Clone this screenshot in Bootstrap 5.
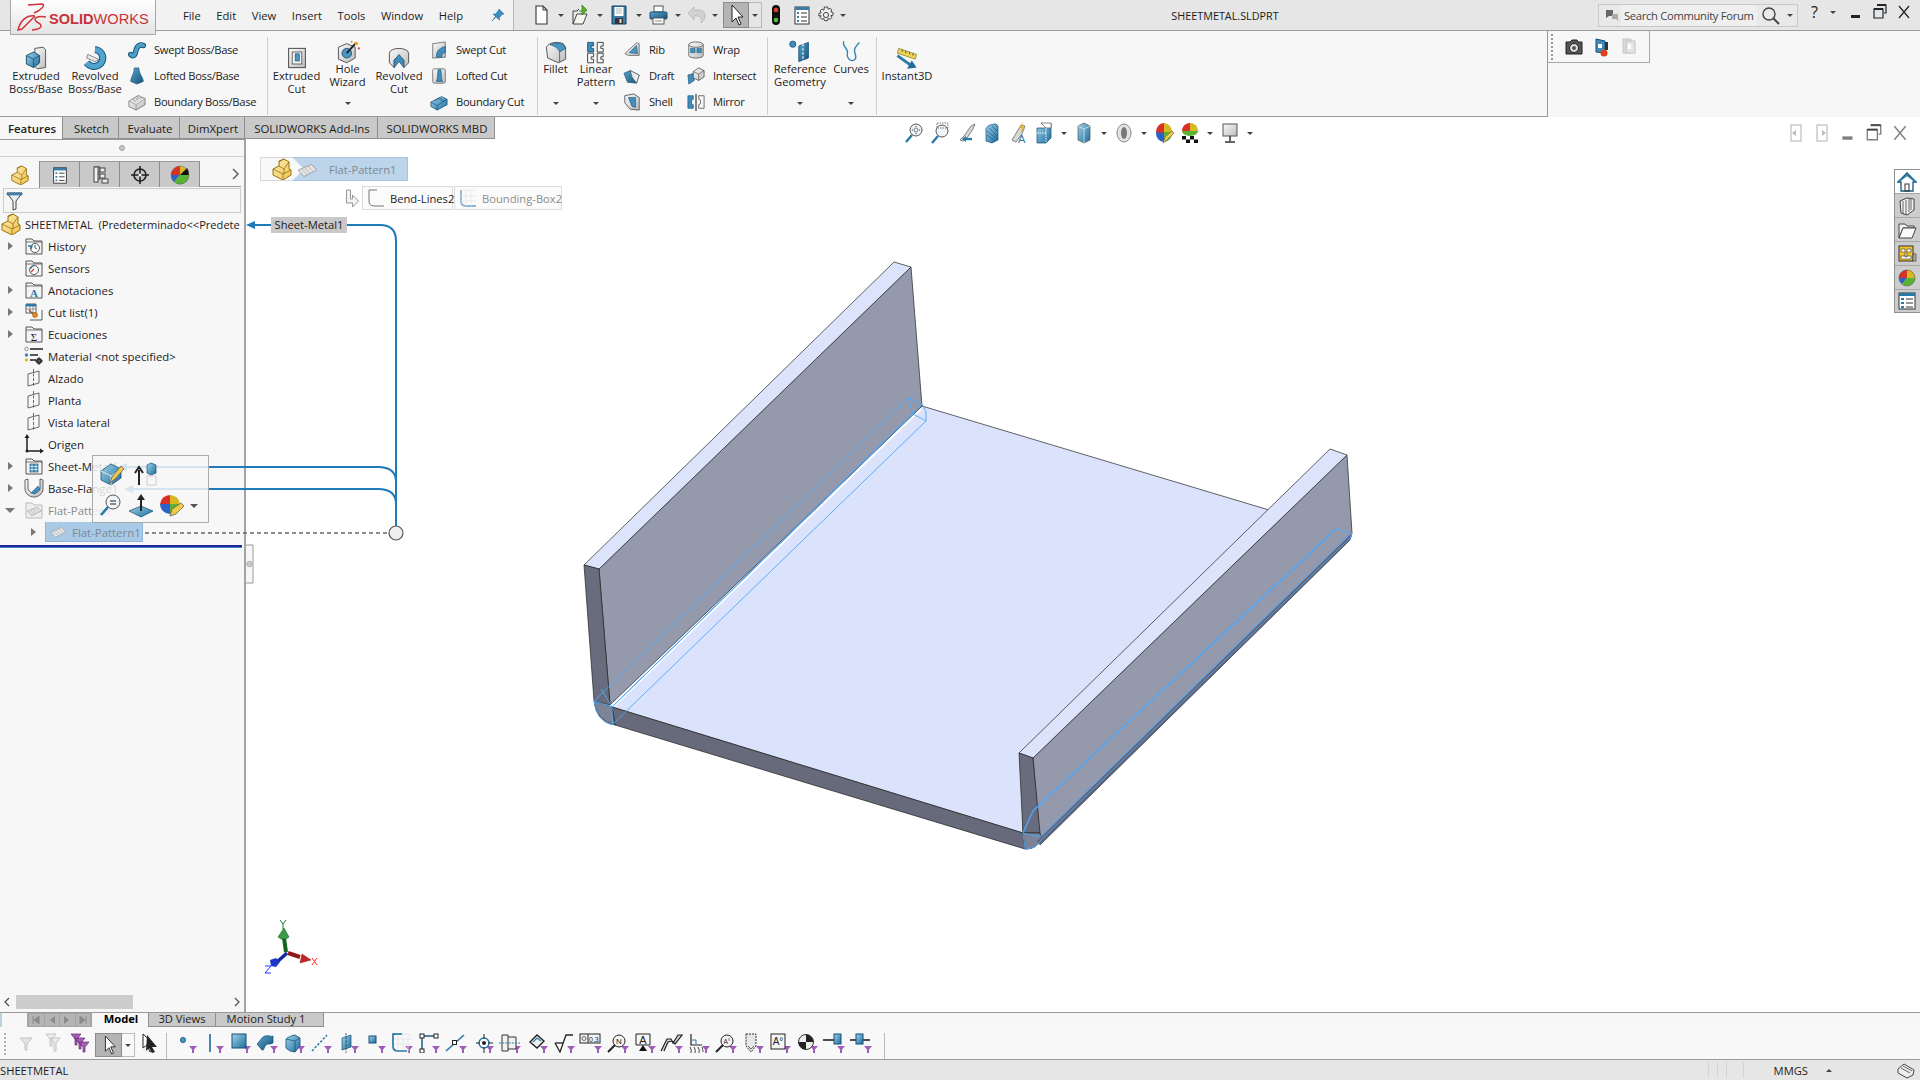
<!DOCTYPE html>
<html lang="en">
<head>
<meta charset="utf-8">
<title>SOLIDWORKS</title>
<link href="https://cdn.jsdelivr.net/npm/bootstrap@5.3.0/dist/css/bootstrap.min.css" rel="stylesheet">
<style>
html,body{height:100%;margin:0}
body{width:1920px;height:1080px;overflow:hidden;background:#fff;font-family:"Open Sans","Noto Sans",sans-serif;font-size:11.2px;line-height:13px;color:#1c1c1c;position:relative}
svg{display:block;flex:none}
.titlebar{height:31px;flex:none;background:#e6e6e6;border-bottom:1px solid #9c9c9c}
.logo{width:146px;height:35px;margin-left:10px;background:linear-gradient(#fff,#e4e4e4);border:1px solid #a8a8a8;border-top:0;position:relative;z-index:8;flex:none;padding-left:6px;gap:3px}
.logo-text{font-family:"Liberation Sans",sans-serif;font-size:14.6px;color:#c8323a;line-height:15px;padding-top:5px}
.logo-text b{font-weight:700}
.logo-text span{font-weight:400}
.menuzone{width:358px;height:30px;background:#f2f2f2;border-right:1px solid #b8b8b8;flex:none;padding-left:27px;gap:15.6px}
.qbar{padding-left:17px}
.qi{width:20px;height:22px}
.car{width:0;height:0;border-left:3px solid transparent;border-right:3px solid transparent;border-top:3px solid #444;flex:none}
.carcell{width:19px}
.cc16{width:16px}
.selbox{width:26px;height:26px;background:#b4b4b4;border:1px solid #8c8c8c}
.selcar{width:13px;height:26px;border:1px solid #b9b9b9;border-left:0}
.ms6{margin-left:6px}
.doctitle{position:absolute;left:1120px;width:210px;top:9px;text-align:center;font-size:10.8px}
.search{width:200px;height:23px;background:#e9e9e9;border:1px solid #c8c8c8;margin-left:1598px;flex:none;position:absolute;left:0;top:4px}
.search-in{background:#efefef;width:136px;height:21px;padding-left:3px;color:#444;white-space:nowrap;letter-spacing:-.3px;overflow:hidden}
.winbtns{position:absolute;top:4px;left:1811px}
.qm{font-size:16px;margin-right:8px}
.wcar{margin-left:4px;margin-right:12px}
.upper{height:86px;flex:none;background:#f7f7f7}
.ribbon{width:1548px;height:86px;flex:none;border-right:1px solid #999;border-bottom:1px solid #999;padding-top:6px;background:#f7f7f7}
.grp{height:78px;border-right:1px solid #cfcfcf;flex:none}
.g1{width:268px;padding-left:6px}.g2{width:270px;padding-left:3px}.g3{width:230px}.g4{width:109px}.g5{width:60px}
.rb{flex:none;text-align:center;align-items:center;height:78px}
.rb .ric{height:24px;width:24px;flex:none}
.va{padding-top:9px}.vb{padding-top:3px}
.va .lab{margin-top:-1px}
.vb .lab{margin-top:-2px}
.rb .car{margin-top:auto;margin-bottom:10px}
.w60{width:60px}.w58{width:58px}.w51{width:51px}.w52{width:52px}.w35{width:35px}.w46{width:46px}.w64{width:64px}.w38{width:38px}
.rl{flex:none;letter-spacing:-.3px;margin-top:-1px}
.rl>div{height:26px;gap:8px;white-space:nowrap}
.rl svg{margin-top:1px}
.ml4{margin-left:4px}.ml5{margin-left:5px}
.wl1{width:64px}
.shots{width:102px;height:32px;border-right:1px solid #a8a8a8;border-bottom:1px solid #a8a8a8;padding-left:3px;gap:7px;flex:none}
.grip{width:0;height:26px;border-left:2px dotted #9a9a9a;margin-right:4px}
.tabsrow{height:22px;flex:none;background:#fff;position:relative;z-index:3}
.cmtab{height:22px;border:1px solid #8f8f8f;border-left:0;border-top:0;background:#c9c9c9;text-align:center;line-height:21px;padding:1px 0 0 2px;flex:none;font-size:11.4px}
.cmtab.on{background:#f7f7f7;font-weight:600;border-bottom:0;border-right:1px solid #8f8f8f}
.t63{width:63px}.t56{width:56px}.t61{width:61px}.t65{width:65px}.t133{width:133px}.t117{width:117px}
.vtb{margin-left:406px;padding-top:5px;height:22px;overflow:visible}
.vi{width:26px;height:22px}
.vc{width:14px;display:flex;justify-content:center;padding-top:10px}
.dctl{margin-left:auto;padding-top:5px;padding-right:7px}
.main{flex:1 1 auto;min-height:0;height:873px}
.panel{width:246px;flex:none;background:#f7f7f7;border-right:2px solid #a4a4a4;border-top:1px solid #999;position:relative}
.pgrip{height:17px;border-bottom:1px solid #d0d0d0;flex:none;justify-content:center}
.dot{width:6px;height:6px;border-radius:50%;background:#c8c8c8;border:1px solid #a0a0a0}
.ptabs{margin-top:4px;height:26px;flex:none;border-bottom:1px solid #9a9a9a;margin-right:3px}
.ptab{width:40px;height:26px;background:#c9c9c9;border-right:1px solid #8c8c8c;border-top:1px solid #9a9a9a;flex:none;justify-content:center}
.ptab.on{background:#f7f7f7;border-top:0;margin-bottom:-1px;position:relative;height:27px}
.chev{margin-left:auto}
.pfilter{margin:1px 3px 0 3px;height:25px;border:1px solid #ccc;background:#f6f6f6;flex:none;padding-left:2px}
.tree{margin-top:0;flex:none}
.tree .list-group-item{background:transparent;border:0;padding:0;height:22px;color:#1c1c1c;white-space:nowrap;overflow:hidden;display:flex;align-items:center;font-size:11.4px;border-radius:0}
.ta{width:20px;flex:none;display:flex;justify-content:center}
.ti{width:20px;height:20px;margin-left:4px;margin-right:4px}
.tree .list-group-item.root{font-size:11.1px}
.tree .root .ti{width:22px;height:22px;margin-left:0;margin-right:3px}
.tree .list-group-item.pm{color:#8a8a8a}
.ta10{width:10px;margin-left:28px}
.tree .list-group-item .flatsel{margin-left:7px;width:98px;height:20px;background:#a9cae6;color:#7c8894;padding-left:2px;gap:4px;border:1px solid #8fb6d8;border-top-color:#a9cae6}
.arr-r{width:0;height:0;border-top:4px solid transparent;border-bottom:4px solid transparent;border-left:5px solid #777}
.arr-d{width:0;height:0;border-left:5px solid transparent;border-right:5px solid transparent;border-top:5px solid #777}
.bluebar{height:3px;background:#2323a0;margin-right:2px;flex:none;margin-top:2px;border-bottom:1px solid #3a86c0}
.hsb{height:14px;margin-top:auto;margin-bottom:3px;flex:none}
.thumb{width:117px;height:14px;background:#cdcdcd;margin-left:4px}
.sa{width:9px;justify-content:center;display:flex;margin-left:3px}
.viewport{position:relative;flex:1 1 auto;background:#fff;min-width:0}
.model{position:absolute;left:0;top:0}
.crumb{left:14px;top:18px}
.cr1{width:147px;height:24px;border:1px solid #d8d8d8;background:#f8f8f8;color:#7c8894}
.cr1 .blue{position:absolute;left:31px;top:-1px;bottom:-1px;width:116px;background:#bcd5ea;border:1px solid #a6c4dd;border-left:0;clip-path:polygon(0 0,100% 0,100% 100%,0 100%,12px 50%)}
.cr1 .tx{position:absolute;left:68px;top:5px}
.cpart{left:10px;top:0}
.cflat{left:35px;top:1px}
.cr2{position:absolute;left:97px;top:47px;gap:1px}
.cbox{height:24px;border:1px solid #dcdcdc;background:#fbfbfb;gap:4px;padding-left:3px;white-space:nowrap}
.b1{width:91px}.b2{width:108px;color:#8b8b8b}
.bentry{width:17px;margin-right:1px}
.task{position:absolute;right:0;top:30px;width:26px;border:1px solid #8f8f8f;border-right:0;background:#cdcdcd}
.task>div{height:24px;width:25px;border-bottom:1px solid #a8a8a8;padding-left:2px}
.task>div:last-child{border-bottom:0;height:22px}
.task>.on{background:#fff}
.overlay{position:absolute;left:0;top:0;z-index:5;pointer-events:none}
.smlabel{position:absolute;left:271px;top:217px;width:76px;height:16px;background:#c9c9c9;z-index:6;text-align:center;line-height:15px}
.ctx{position:absolute;left:92px;top:455px;width:117px;height:68px;background:rgba(247,247,247,.84);border:1px solid #ababab;z-index:7;padding:5px 0 0 5px;row-gap:3px}
.ctx .c{width:30px;height:28px}
.ctx .car{margin-left:2px;margin-top:12px;border-top-color:#555;border-left-width:4px;border-right-width:4px;border-top-width:4px}
.btabs{height:15px;flex:none;background:#f7f7f7;border-top:1px solid #999;font-size:11.2px}
.bmark{width:2px;height:14px;background:#b6d4e4;margin-right:25px}
.nav4{width:65px;height:14px;background:#a4a4a4;gap:1px;padding:1px 2px}
.nav4 span{flex:1;height:12px;background:#b4b4b4;display:flex;align-items:center;justify-content:center}
.btab{height:14px;line-height:11px;border-right:1px solid #8f8f8f;border-bottom:1px solid #8f8f8f;background:#c9c9c9;text-align:center;flex:none}
.btab.on{background:#f7f7f7;border-bottom:0;font-weight:700;color:#000;padding-left:2px}
.t57{width:57px}.t67{width:67px}.t108{width:108px;padding-right:7px}
.btools{height:33px;flex:none;background:#f8f8f8;border-bottom:1px solid #9c9c9c;padding-top:6px}
.bgrip{margin-left:4px;width:0;height:22px;border-left:2px dotted #b0b0b0;margin-right:10px}
.bf{width:27px;height:20px;flex:none}
.fg2{margin-left:6px}
.fg3{margin-left:4px;margin-right:4px}
.blk{margin-left:4px;margin-right:7px}
.sep{width:1px;height:26px;background:#bcbcbc;flex:none}
.sep1{margin-right:7px}
.sep2{margin-left:8px}
.sel{width:27px;height:24px;background:#b4b4b4;border:1px solid #8c8c8c;margin-left:1px}
.selc{width:13px;height:24px;border:1px solid #bdbdbd;border-left:0}
.status{height:20px;flex:none;background:#e6e6e6;font-size:11.2px}
.status .vdiv{width:1px;height:16px;background:#d4d4d4}
.mmgs{margin:0 18px 0 30px}
.caru{width:0;height:0;border-left:3px solid transparent;border-right:3px solid transparent;border-bottom:3px solid #444;margin-right:64px}
</style>
</head>
<body class="d-flex flex-column">

<svg width="0" height="0" class="position-absolute">
<defs>
<linearGradient id="gb" x1="0" y1="0" x2="1" y2="1"><stop offset="0" stop-color="#9fd3ea"/><stop offset="1" stop-color="#1d6c9c"/></linearGradient>
<linearGradient id="gd" x1="0" y1="0" x2="1" y2="1"><stop offset="0" stop-color="#5aa6cc"/><stop offset="1" stop-color="#134f78"/></linearGradient>
<linearGradient id="gg" x1="0" y1="0" x2="1" y2="1"><stop offset="0" stop-color="#fafafa"/><stop offset="1" stop-color="#bdbdbd"/></linearGradient>
<linearGradient id="gy" x1="0" y1="0" x2="1" y2="1"><stop offset="0" stop-color="#fdeeb4"/><stop offset="1" stop-color="#efc250"/></linearGradient>

<symbol id="ext" viewBox="0 0 20 20"><path d="M9 2l7-1 2 2v15l-7 1-2-2z" fill="url(#gg)" stroke="#555" stroke-width=".8"/><path d="M2 8l6-3 5 3v6l-5 4-6-3z" fill="url(#gb)" stroke="#1d4f70" stroke-width=".8"/><path d="M2 8l6 3 5-3M8 11v7" fill="none" stroke="#1d4f70" stroke-width=".7"/></symbol>
<symbol id="rev" viewBox="0 0 20 20"><path d="M10 3a7 7 0 0 1 3 13 A8 8 0 0 1 3 14" fill="none" stroke="#13547e" stroke-width="6"/><path d="M10 3a7 7 0 0 1 3 13 A8 8 0 0 1 3 14" fill="none" stroke="#52a4cc" stroke-width="4.4"/><path d="M4 7l9 4-3 2-7-3z" fill="#e8e8e8" stroke="#666" stroke-width=".6"/></symbol>
<symbol id="swp" viewBox="0 0 20 20"><path d="M3 15c4 4 5-1 6-5s4-7 8-5" fill="none" stroke="#134f78" stroke-width="6" stroke-linecap="round"/><path d="M3 15c4 4 5-1 6-5s4-7 8-5" fill="none" stroke="#4f9ec6" stroke-width="4" stroke-linecap="round"/></symbol>
<symbol id="lof" viewBox="0 0 20 20"><path d="M7 1h5c0 7 5 10 5 15l-7 3-7-3c0-5 4-8 4-15z" fill="url(#gd)" stroke="#134f78" stroke-width=".7"/></symbol>
<symbol id="bnd" viewBox="0 0 20 20"><path d="M1 9l10-6 8 3v7l-10 6-8-4z" fill="url(#gg)" stroke="#666" stroke-width=".8"/><path d="M1 9l8 4 10-7M9 13v6M5 7l3-2 3 2-3 2zM10 4l3-1 2 2-3 1z" fill="#e2e2e2" stroke="#777" stroke-width=".6"/></symbol>
<symbol id="xcut" viewBox="0 0 20 20"><rect x="3" y="2" width="14" height="16" fill="url(#gg)" stroke="#555" stroke-width=".9"/><rect x="6" y="5" width="8" height="10" fill="#f3f3f3" stroke="#555" stroke-width=".7"/><rect x="8.5" y="6.5" width="3.5" height="6" fill="#4a96c0" stroke="#134f78" stroke-width=".5"/></symbol>
<symbol id="hole" viewBox="0 0 20 20"><path d="M2 6l7-3 7 3v9l-7 4-7-3z" fill="url(#gg)" stroke="#555" stroke-width=".8"/><circle cx="9" cy="11" r="4" fill="#4a96c0" stroke="#134f78" stroke-width=".7"/><path d="M9 11l8-9" stroke="#222" stroke-width="1.6"/><circle cx="17" cy="3" r="1.5" fill="#f5a623"/><circle cx="13" cy="1.5" r=".9" fill="#e0a020"/><circle cx="19" cy="7" r=".9" fill="#d33"/></symbol>
<symbol id="rvc" viewBox="0 0 20 20"><path d="M2 6a8 4 0 0 1 16 0v8l-4 4v-6a4 2 0 0 0-8 0v6l-4-4z" fill="url(#gg)" stroke="#555" stroke-width=".8"/><path d="M6 12v6l4-5 4 5v-6l-4-5z" fill="#3f8db8" stroke="#134f78" stroke-width=".6"/></symbol>
<symbol id="swc" viewBox="0 0 20 20"><path d="M3 3l14-2v17l-14 1z" fill="url(#gg)" stroke="#555" stroke-width=".8"/><path d="M7 18c0-6 2-10 10-12v7c-3 0-4 2-4 5z" fill="#3f8db8" stroke="#134f78" stroke-width=".6"/></symbol>
<symbol id="lfc" viewBox="0 0 20 20"><rect x="3" y="2" width="14" height="16" rx="2" fill="url(#gg)" stroke="#555" stroke-width=".8"/><path d="M7 16c2-4 1-8 2-13h3c1 5 0 9 2 13z" fill="#3f8db8" stroke="#134f78" stroke-width=".6"/></symbol>
<symbol id="bdc" viewBox="0 0 20 20"><path d="M1 10l12-6 6 3v6l-11 6-7-4z" fill="url(#gb)" stroke="#134f78" stroke-width=".8"/><path d="M5 9l4-3 4 1c-1 3 2 3 4 1" fill="none" stroke="#134f78" stroke-width=".8"/><path d="M1 10l7 4 11-7M8 14v5" fill="none" stroke="#134f78" stroke-width=".7"/></symbol>
<symbol id="fil" viewBox="0 0 20 20"><path d="M2 6c2-4 9-5 14-3l2 3v10l-6 3-9-4z" fill="url(#gg)" stroke="#555" stroke-width=".8"/><path d="M5 4c3-2 8-2 11 0l2 3-5 3c-1-3-4-5-8-6z" fill="#4a96c0" stroke="#134f78" stroke-width=".5"/><path d="M13 10v9" stroke="#666" stroke-width=".8"/></symbol>
<symbol id="lin" viewBox="0 0 20 20"><path d="M3 2h5v3H6v2h2v3H3z" fill="#3f8db8" stroke="#134f78" stroke-width=".7"/><path d="M11 2h5v3h-2v2h2v3h-5z M11 11h5v3h-2v2h2v3h-5z" fill="#f5f5f5" stroke="#444" stroke-width=".8"/><path d="M3 11h5v3H6v2h2v3H3z" fill="#f5f5f5" stroke="#444" stroke-width=".8"/></symbol>
<symbol id="rib" viewBox="0 0 20 20"><path d="M2 14L15 2l3 1v13H6z" fill="url(#gg)" stroke="#555" stroke-width=".8"/><path d="M7 13L15 5l1 9z" fill="#4a96c0" stroke="#134f78" stroke-width=".6"/></symbol>
<symbol id="drf" viewBox="0 0 20 20"><path d="M1 7l7-3 10 5-3 9-10-1z" fill="url(#gd)" stroke="#134f78" stroke-width=".7"/><path d="M8 4l10 5-3 9-5-7z" fill="#eee" stroke="#444" stroke-width=".7"/></symbol>
<symbol id="shl" viewBox="0 0 20 20"><path d="M2 3l10-2 6 4v14l-10-1-6-7z" fill="url(#gg)" stroke="#444" stroke-width=".9"/><path d="M6 5l8 0v11l-4-1z" fill="#3f8db8" stroke="#134f78" stroke-width=".6"/></symbol>
<symbol id="wrp" viewBox="0 0 20 20"><path d="M2 4a8 3 0 0 1 16 0v12a8 3 0 0 1-16 0z" fill="url(#gg)" stroke="#555" stroke-width=".9"/><path d="M2 4a8 3 0 0 0 16 0" fill="none" stroke="#555" stroke-width=".8"/><path d="M4 8h5v5H4zM11 8h5v5h-5z" fill="#3f8db8" stroke="#134f78" stroke-width=".5"/></symbol>
<symbol id="int" viewBox="0 0 20 20"><path d="M1 9l7-2v8l-6 4z" fill="#3f8db8" stroke="#134f78" stroke-width=".7"/><path d="M7 5l6-4 6 3v7l-6 4-6-3z" fill="url(#gg)" stroke="#444" stroke-width=".8"/><path d="M7 5l6 3 6-4M13 8v7" fill="none" stroke="#444" stroke-width=".7"/></symbol>
<symbol id="mir" viewBox="0 0 20 20"><path d="M1 3h6v4l-2 1v4l2 1v4H1z" fill="#3f8db8" stroke="#134f78" stroke-width=".7"/><path d="M19 3h-6v4l2 1v4l-2 1v4h6z" fill="#f5f5f5" stroke="#444" stroke-width=".8"/><path d="M10 1v19" stroke="#111" stroke-width="1.1"/></symbol>
<symbol id="ref" viewBox="0 0 20 20"><circle cx="4" cy="3.5" r="2.6" fill="#3f8db8" stroke="#134f78" stroke-width=".6"/><path d="M9 5l8-3v13l-8 3z" fill="url(#gd)" stroke="#134f78" stroke-width=".7"/><path d="M12.5 0v20" stroke="#fff" stroke-width="1" stroke-dasharray="2 1.4"/></symbol>
<symbol id="crv" viewBox="0 0 20 20"><path d="M4 1c-2 4 4 6 3 10-1 3 2 7 5 6s2-4 1-7 2-6 4-8" fill="none" stroke="#3a86b0" stroke-width="1.2"/></symbol>
<symbol id="i3d" viewBox="0 0 20 20"><path d="M3 2l15 5-1 4L2 6z" fill="#f1d35a" stroke="#8a7a20" stroke-width=".6"/><path d="M6 3v2M9 4v2M12 5v2M15 6v2" stroke="#444" stroke-width=".7"/><path d="M2 8l11 8" stroke="#2a7aa8" stroke-width="2.4"/><path d="M10 19l8-1-4-6z" fill="#1d6c9c"/></symbol>

<symbol id="new" viewBox="0 0 20 22"><path d="M5 2h7l4 4v14H5z" fill="#fff" stroke="#333" stroke-width="1.1"/><path d="M12 2v4h4" fill="none" stroke="#333"/></symbol>
<symbol id="opn" viewBox="0 0 20 22"><path d="M3 7v13l10 0 4-10H7L3 20" fill="#f6f6f0" stroke="#444" stroke-width="1"/><path d="M3 7h4l2-2" fill="none" stroke="#444"/><path d="M10 7h3V1l5 5-5 5V8" fill="#5cb030" stroke="#2d7d12" stroke-width=".7" transform="translate(-1 0)"/></symbol>
<symbol id="sav" viewBox="0 0 20 22"><path d="M3 2h14v18H3z" fill="#3a7ea8" stroke="#123e5e" stroke-width="1"/><rect x="5.5" y="3" width="9" height="9" fill="#fff"/><path d="M7 5h6M7 7h6M7 9h6" stroke="#999" stroke-width=".7"/><rect x="6" y="14" width="8" height="6" fill="#333"/><rect x="10.5" y="15" width="2" height="4" fill="#ddd"/></symbol>
<symbol id="prt" viewBox="0 0 20 22"><rect x="6" y="2" width="9" height="6" fill="#fff" stroke="#555"/><rect x="2" y="8" width="17" height="7" rx="1" fill="url(#gd)" stroke="#134f78"/><rect x="5" y="14" width="11" height="6" fill="#fff" stroke="#555"/><path d="M7 17h7" stroke="#888"/></symbol>
<symbol id="und" viewBox="0 0 20 22"><path d="M7 6h6c3 0 5 3 5 6s-2 5-4 7c1-3 0-7-3-7H7v4L1 9l6-6z" fill="#d2d2d2" stroke="#b0b0b0" stroke-width=".7"/></symbol>
<symbol id="cur" viewBox="0 0 20 22"><path d="M6 1v17l4-4 3 7 2-1-3-7h5z" fill="#fff" stroke="#222" stroke-width="1"/></symbol>
<symbol id="trf" viewBox="0 0 20 22"><rect x="6" y="1" width="8" height="20" rx="4" fill="#111"/><circle cx="10" cy="6" r="2.3" fill="#e23b2a"/><circle cx="10" cy="16" r="2.3" fill="#4cc23a"/></symbol>
<symbol id="pro" viewBox="0 0 20 22"><rect x="3" y="3" width="14" height="17" fill="#fff" stroke="#333"/><rect x="3" y="3" width="14" height="3" fill="#3a7ea8"/><path d="M5 8h2v2H5zM5 12h2v2H5zM5 16h2v2H5z" fill="#3a7ea8"/><path d="M9 9h6M9 13h6M9 17h6" stroke="#333"/></symbol>
<symbol id="gea" viewBox="0 0 20 22"><path d="M10 3l1.600 0 .6 2.300 2-1 1.600 1.600-1 2 2.300.6v2.600l-2.300.6 1 2-1.600 1.600-2-1-.6 2.300H8.400l-.6-2.300-2 1-1.600-1.600 1-2L2.900 12V9.400L5.200 8.800l-1-2L5.800 5.200l2 1L8.400 3z" fill="#f0f0f0" stroke="#444"/><circle cx="10" cy="11" r="2.600" fill="none" stroke="#444"/></symbol>

<symbol id="part" viewBox="0 0 22 22"><path d="M2 11l6-3V3l5-2 5 3v7l2 1v5l-8 5-10-5z" fill="url(#gy)" stroke="#96700e" stroke-width="1"/><path d="M2 11l10 5v5M12 16l8-4M8 8l5 3v5M13 11l5-7M13 1l-5 3" fill="none" stroke="#96700e" stroke-width=".8"/></symbol>
<symbol id="ptree" viewBox="0 0 20 20"><path d="M4 2h6v5H7v2h3v5H7v3" fill="none" stroke="#444"/><rect x="4" y="2" width="4" height="15" fill="#f2f2f2" stroke="#444"/><rect x="10" y="3" width="5" height="4" fill="#eee" stroke="#444"/><rect x="10" y="9" width="5" height="4" fill="#eee" stroke="#444"/><rect x="12" y="14" width="6" height="4" fill="#eee" stroke="#444"/></symbol>
<symbol id="tgt" viewBox="0 0 20 20"><circle cx="10" cy="10" r="6" fill="none" stroke="#222" stroke-width="1.600"/><path d="M10 1v18M1 10h18" stroke="#222" stroke-width="1.600"/><circle cx="10" cy="10" r="1.500" fill="#fff"/></symbol>
<symbol id="ball" viewBox="0 0 20 20"><path d="M10 10V1a9 9 0 0 1 9 9z" fill="#d9b820"/><path d="M10 10H1a9 9 0 0 1 9-9z" fill="#d83226"/><path d="M10 10H1a9 9 0 0 0 3 7z" fill="#2c62c8"/><path d="M10 10l-6 7a9 9 0 0 0 15-7z" fill="#58b334"/><path d="M10 10l7-7a9 9 0 0 1 2 7z" fill="#111"/><circle cx="10" cy="10" r="9" fill="none" stroke="#666" stroke-width=".5"/></symbol>
<symbol id="flt" viewBox="0 0 18 20"><path d="M1 2h15L10 10v8l-3 1v-9z" fill="#e8f0f5" stroke="#333" stroke-width=".9"/><path d="M1 2h15v2H1z" fill="#4a96c0" stroke="#134f78" stroke-width=".5"/></symbol>
<symbol id="fold" viewBox="0 0 20 20"><path d="M2 3h6l2 2h8v13H2z" fill="#f4f4f4" stroke="#444" stroke-width=".9"/><path d="M2 6h16" stroke="#444" stroke-width=".7"/></symbol>
<symbol id="hist" viewBox="0 0 20 20"><use href="#fold"/><circle cx="11" cy="12" r="4.500" fill="#fff" stroke="#333" stroke-width=".8"/><path d="M4 10h4l-1 3" fill="none" stroke="#2a7aa8" stroke-width="1.400"/><path d="M11 9v3l2 1" fill="none" stroke="#333" stroke-width=".8"/></symbol>
<symbol id="sens" viewBox="0 0 20 20"><use href="#fold"/><circle cx="10" cy="12" r="4.500" fill="#fff" stroke="#333" stroke-width=".8"/><path d="M7 14l3-3" stroke="#d33" stroke-width="1.200"/><path d="M6.500 11a4 4 0 0 1 3-3" stroke="#2a7aa8" stroke-width="1.200" fill="none"/></symbol>
<symbol id="anno" viewBox="0 0 20 20"><use href="#fold"/><text x="10" y="17" text-anchor="middle" font-family="Liberation Serif,serif" font-weight="700" font-size="11" fill="#2a7aa8">A</text></symbol>
<symbol id="cutl" viewBox="0 0 20 20"><path d="M2 2h10v9H2z" fill="#fff" stroke="#333" stroke-width=".8"/><path d="M2 2h10v2.500H2z" fill="#2a7aa8"/><path d="M2 7h10M6 4v7M9 4v7" stroke="#555" stroke-width=".6"/><path d="M18 8v10H6" fill="none" stroke="#333" stroke-width=".8"/><path d="M5 8l4 4" stroke="#8a5a20" stroke-width="1.400"/><circle cx="11" cy="13" r="2.500" fill="#e58a1f" stroke="#925208" stroke-width=".5"/></symbol>
<symbol id="eqn" viewBox="0 0 20 20"><use href="#fold"/><text x="10" y="17" text-anchor="middle" font-family="Liberation Serif,serif" font-size="11" fill="#222">&#931;</text></symbol>
<symbol id="mat" viewBox="0 0 20 20"><circle cx="2.500" cy="3" r="1.800" fill="#eee" stroke="#666" stroke-width=".6"/><circle cx="2.500" cy="9" r="1.800" fill="#3f8db8"/><circle cx="2.500" cy="14" r="1.800" fill="#e6c12c"/><path d="M6 3h13M6 9h8M6 14h6" stroke="#222" stroke-width="1.500"/><circle cx="15" cy="15" r="3" fill="#333"/><circle cx="15" cy="15" r="1" fill="#fff"/><path d="M15 11v8M11 15h8" stroke="#333"/></symbol>
<symbol id="pln" viewBox="0 0 20 20"><path d="M4 6l11-3v12L4 18z" fill="none" stroke="#444" stroke-width=".8"/><path d="M9.500 1v18" stroke="#444" stroke-width=".8" stroke-dasharray="3 1.500"/></symbol>
<symbol id="org" viewBox="0 0 20 20"><path d="M3 3v14h14" fill="none" stroke="#222" stroke-width="1.500"/><path d="M3 0l-2.500 4h5zM20 17l-4-2.500v5z" fill="#222"/><circle cx="3" cy="17" r="1.500" fill="#222"/></symbol>
<symbol id="smet" viewBox="0 0 20 20"><use href="#fold"/><rect x="6" y="8" width="8" height="8" fill="#3f8db8" stroke="#134f78" stroke-width=".6"/><path d="M8 8v8M12 8v8M6 10.500h8M6 13.500h8" stroke="#fff" stroke-width=".6"/></symbol>
<symbol id="bfl" viewBox="0 0 20 20"><path d="M1 2l3-1v9c0 3 3 5 6 5s6-2 6-5V1l3 1v9c0 5-5 8-9 8s-9-3-9-8z" fill="url(#gg)" stroke="#444" stroke-width=".8"/><path d="M7 15l7-7 2 3-5 5z" fill="#3f8db8" stroke="#134f78" stroke-width=".5"/></symbol>
<symbol id="fpt" viewBox="0 0 20 20"><path d="M2 10l12-5 5 5-12 6z" fill="#e3e3e3" stroke="#9a9a9a" stroke-width=".8"/><path d="M5 9l5 5M8 8l5 5M11 6.500l5 5" stroke="#b0b0b0" stroke-width=".7"/></symbol>
<symbol id="ffld" viewBox="0 0 20 20"><path d="M2 3h6l2 2h8v13H2z" fill="#efefef" stroke="#b3b3b3" stroke-width=".9"/><use href="#fpt" x="2" y="3" width="16" height="16"/></symbol>

<symbol id="v1" viewBox="0 0 20 22"><circle cx="12" cy="8" r="6" fill="#eef4f8" stroke="#555"/><path d="M8 13l-6 7" stroke="#2a7aa8" stroke-width="2.400"/><circle cx="12" cy="8" r="2" fill="none" stroke="#555" stroke-width=".7"/><path d="M12 4v1M12 11v1M8 8h1M15 8h1" stroke="#444"/></symbol>
<symbol id="v2" viewBox="0 0 20 22"><circle cx="12" cy="9" r="6" fill="#eef4f8" stroke="#555"/><path d="M8 14l-6 7" stroke="#2a7aa8" stroke-width="2.400"/><rect x="7" y="1" width="11" height="5" fill="none" stroke="#777" stroke-dasharray="1.500 1"/></symbol>
<symbol id="v3" viewBox="0 0 20 22"><path d="M4 18l4-4 7-10 4-2-2 5-6 9-4 3z" fill="#d8d8d8" stroke="#666" stroke-width=".8"/><path d="M9 17h7" stroke="#2a7aa8" stroke-width="2.400"/><path d="M10 14l-4 3 4 3z" fill="#2a7aa8"/></symbol>
<symbol id="v4" viewBox="0 0 20 22"><path d="M4 7c0-2 4-5 10-5l2 2v14l-6 3-6-2z" fill="url(#gb)" stroke="#134f78" stroke-width=".7"/><path d="M5 9l10 8M5 13l8 6M7 6l8 8M10 4l5 5" stroke="#134f78" stroke-width=".6"/></symbol>
<symbol id="v5" viewBox="0 0 20 22"><path d="M4 18l9-15 4 1-3 8-6 8z" fill="#d8d8d8" stroke="#666" stroke-width=".8"/><path d="M15 0l-4 6 3 0-2 5 5-6-3 0z" fill="#e8b020"/><text x="10" y="21" font-family="Liberation Sans,sans-serif" font-size="11" fill="#2a7aa8">A</text></symbol>
<symbol id="v6" viewBox="0 0 20 22"><path d="M3 6l9 0 5-5v15l-5 5H3z" fill="url(#gb)" stroke="#134f78" stroke-width=".7"/><path d="M7 1h10v5H12z" fill="#fff" stroke="#555" stroke-width=".7"/><path d="M12 6v15M3 11h9" stroke="#fff" stroke-dasharray="1.500 1"/></symbol>
<symbol id="v7" viewBox="0 0 20 22"><path d="M4 4l6-3 6 3v14l-6 3-6-3z" fill="url(#gb)" stroke="#555" stroke-width=".7"/><path d="M4 4l6 3 6-3M10 7v14" fill="none" stroke="#eee" stroke-width=".7"/></symbol>
<symbol id="v8" viewBox="0 0 20 22"><ellipse cx="10" cy="11" rx="7" ry="9" fill="#e4e4e4" stroke="#888"/><ellipse cx="10" cy="11" rx="3" ry="6" fill="#777"/></symbol>
<symbol id="v9" viewBox="0 0 20 22"><path d="M10 11V1a8 9 0 0 1 8 9z" fill="#d8b820"/><path d="M10 11H2a8 9 0 0 1 8-10z" fill="#d83226"/><path d="M2 10a8 9 0 0 0 8 10v-9z" fill="#2c62c8"/><path d="M10 20a8 9 0 0 0 8-10h-8z" fill="#58b334"/><path d="M9 21l2-6 7-6 2 2-7 7z" fill="#f2c84a" stroke="#555" stroke-width=".6"/></symbol>
<symbol id="v10" viewBox="0 0 20 22"><path d="M10 9V1a8 8 0 0 1 8 8z" fill="#d8b820"/><path d="M10 9H2a8 8 0 0 1 8-8z" fill="#d83226"/><path d="M2 9a8 5 0 0 0 16 0z" fill="#58b334"/><rect x="2" y="14" width="16" height="7" fill="#fff"/><path d="M2 14h4v3.500H2zM10 14h4v3.500h-4zM6 17.500h4V21H6zM14 17.500h4V21h-4z" fill="#111"/></symbol>
<symbol id="v11" viewBox="0 0 20 22"><rect x="3" y="2" width="14" height="12" fill="url(#gg)" stroke="#555"/><path d="M10 14v5M5 20h10" stroke="#333" stroke-width="1.500"/></symbol>
<symbol id="tprev" viewBox="0 0 16 22"><rect x="3" y="3" width="10" height="16" fill="#fff" stroke="#b0b0b0"/><path d="M4 11l4-3v6z" fill="#bbb"/></symbol>
<symbol id="tnext" viewBox="0 0 16 22"><rect x="3" y="3" width="10" height="16" fill="#fff" stroke="#b0b0b0"/><path d="M12 11L8 8v6z" fill="#bbb"/></symbol>
<symbol id="wmin" viewBox="0 0 16 16"><rect x="3" y="11" width="9" height="3" fill="currentColor"/></symbol>
<symbol id="wres" viewBox="0 0 16 16"><path d="M5 1h9v8h-2M2 5h9v9H2z" fill="none" stroke="currentColor" stroke-width="1.200"/><path d="M2 5h9M5 1h9" stroke="currentColor" stroke-width="2"/></symbol>
<symbol id="wx" viewBox="0 0 16 16"><path d="M3 2l10 12M13 2L3 14" stroke="currentColor" stroke-width="1.300"/></symbol>

<symbol id="cam" viewBox="0 0 20 20"><path d="M2 5h4l2-2h5l1 2h4v12H2z" fill="#555" stroke="#222"/><circle cx="10" cy="11" r="4.500" fill="#ddd" stroke="#222"/><circle cx="10" cy="11" r="2" fill="#555"/></symbol>
<symbol id="vid" viewBox="0 0 20 20"><path d="M5 2l9 2v12l-9-1z" fill="#3f8db8" stroke="#134f78"/><rect x="14" y="5" width="3" height="8" fill="#333"/><rect x="7" y="7" width="4" height="4" fill="#fff"/><circle cx="13" cy="16" r="3.500" fill="#e0401a"/></symbol>
<symbol id="vid2" viewBox="0 0 20 20"><path d="M5 2h8v14H5z" fill="#ddd" stroke="#c4c4c4"/><rect x="8" y="4" width="9" height="12" fill="#e4e4e4" stroke="#c4c4c4"/><rect x="10" y="7" width="3" height="5" fill="#fff"/></symbol>

<symbol id="thome" viewBox="0 0 20 20"><path d="M10 1L1 10h3v9h12v-9h3z" fill="#fff" stroke="#13587e" stroke-width="1.300"/><path d="M1 10l9-7 9 7" fill="none" stroke="#2a7aa8" stroke-width="1.600"/><rect x="8" y="12" width="4" height="7" fill="none" stroke="#333"/></symbol>
<symbol id="tbook" viewBox="0 0 20 20"><path d="M3 5l7-3 7 1v11l-7 5-6-2z" fill="#f0f0f0" stroke="#444"/><path d="M6 5v13M9 4v15M12 3v13M14 3v11" stroke="#444" stroke-width=".8"/></symbol>
<symbol id="tfold" viewBox="0 0 20 20"><path d="M2 4h6l2 2h7v2H6L2 18z" fill="#f2f2f2" stroke="#444"/><path d="M6 8h13l-4 10H2z" fill="#fafafa" stroke="#444"/></symbol>
<symbol id="tdsg" viewBox="0 0 20 20"><rect x="2" y="2" width="14" height="15" fill="#f2c52c" stroke="#333"/><path d="M4 5h4v3H4zM10 5h4v3h-4zM4 12h10v3H4zM8 9h2v4H8z" fill="#fff" stroke="#333" stroke-width=".6"/><rect x="16" y="10" width="3" height="7" fill="#aaa" stroke="#333" stroke-width=".6"/></symbol>
<symbol id="tball" viewBox="0 0 20 20"><path d="M10 10V2a8 8 0 0 1 8 8z" fill="#d8b820"/><path d="M10 10H2a8 8 0 0 1 8-8z" fill="#d83226"/><path d="M2 10a8 8 0 0 0 3 6l5-6z" fill="#2c62c8"/><path d="M5 16a8 8 0 0 0 13-6h-8z" fill="#58b334"/><circle cx="10" cy="10" r="8" fill="none" stroke="#444" stroke-width=".5"/></symbol>
<symbol id="tlist" viewBox="0 0 20 20"><rect x="2" y="2" width="16" height="16" fill="#fff" stroke="#333"/><rect x="2" y="2" width="16" height="3" fill="#2a7aa8"/><path d="M4 7h3v2H4zM4 11h3v2H4zM4 15h3v2H4z" fill="#2a7aa8"/><path d="M9 8h7M9 12h7M9 16h7" stroke="#333"/></symbol>
<symbol id="entry" viewBox="0 0 16 20"><path d="M3 2h4v9h2V7l6 6-6 6v-4H3z" fill="#f3f3f3" stroke="#8c8c8c" stroke-width=".9"/></symbol>
<symbol id="bend" viewBox="0 0 20 20"><path d="M3 2v11q0 5 5 5h10" fill="none" stroke="#777" stroke-width="1"/><path d="M3 2h8" stroke="#777"/></symbol>
<symbol id="bbox" viewBox="0 0 20 20"><path d="M3 2v11q0 5 5 5h10" fill="none" stroke="#8ab5d4" stroke-width="1.800"/><path d="M3 2h14M8 2v16M13 2v16M3 8h15M3 13h15" stroke="#e4e4e4" stroke-width=".7"/></symbol>

<symbol id="fg1" viewBox="0 0 20 20"><path d="M4 5h12l-5 6v6h-2v-6z" fill="#e4e4e4" stroke="#c4c4c4"/></symbol>
<symbol id="fg2" viewBox="0 0 20 20"><path d="M2 1h10l-4 5v7H6V6zM6 5h10l-4 5v8h-2v-8z" fill="#ececec" stroke="#c4c4c4"/></symbol>
<symbol id="fg3" viewBox="0 0 20 20"><path d="M1 1h10L7 6v6H5V6zM4 5h11l-4 5v6H9v-6zM8 9h11l-4 5v5h-2v-5z" fill="#a85cb8" stroke="#5e2b72" stroke-width=".7"/></symbol>
<symbol id="blk" viewBox="0 0 20 20"><path d="M4 1v14l4-3 3 7 2-1-3-7h5z" fill="#fff" stroke="#222"/><path d="M8 2l10 12-5 0 3 5-3 1-3-5-3 3z" fill="#222"/></symbol>

<symbol id="pf" viewBox="0 0 27 20"><path d="M15 13h8l-3 3.500V20h-2v-3.500z" fill="#a05cbc"/></symbol>
<symbol id="b1" viewBox="0 0 27 20"><use href="#pf"/><circle cx="9" cy="7" r="2.600" fill="#4a96c0" stroke="#134f78" stroke-width=".8"/></symbol>
<symbol id="b2" viewBox="0 0 27 20"><use href="#pf"/><path d="M9 1v18" stroke="#2a7aa8" stroke-width="1.800"/></symbol>
<symbol id="b3" viewBox="0 0 27 20"><use href="#pf"/><rect x="4" y="1" width="14" height="14" fill="url(#gb)" stroke="#134f78"/></symbol>
<symbol id="b4" viewBox="0 0 27 20"><use href="#pf"/><path d="M2 11c3-2 4-7 8-8s6 1 8 0v7c-3 2-5 0-7 2s-2 6-4 5z" fill="url(#gd)" stroke="#134f78" stroke-width=".7"/></symbol>
<symbol id="b5" viewBox="0 0 27 20"><use href="#pf"/><path d="M4 6c2-2 7-4 9-4l5 3v8l-5 6-5-1-4-3z" fill="url(#gb)" stroke="#134f78" stroke-width=".8"/><path d="M4 6l9 2 5-3M13 8v11" fill="none" stroke="#134f78" stroke-width=".7"/></symbol>
<symbol id="b6" viewBox="0 0 27 20"><use href="#pf"/><path d="M3 18L18 2" stroke="#2a7aa8" stroke-width="1.500" stroke-dasharray="2.500 1.500"/></symbol>
<symbol id="b7" viewBox="0 0 27 20"><use href="#pf"/><path d="M6 5l9-3v12l-9 3z" fill="url(#gb)" stroke="#134f78" stroke-width=".7"/><path d="M10 0v20" stroke="#333" stroke-width=".8" stroke-dasharray="2.500 1.200"/></symbol>
<symbol id="b8" viewBox="0 0 27 20"><use href="#pf"/><rect x="6" y="3" width="7" height="7" fill="url(#gb)" stroke="#134f78"/></symbol>
<symbol id="b9" viewBox="0 0 27 20"><use href="#pf"/><path d="M3 1h17M8 1v18M13 1v18M18 1v18M3 6h19M3 11h19" stroke="#dfe2e6" stroke-width=".8"/><path d="M5 1H3v12q0 5 5 5h9" fill="none" stroke="#2a7aa8" stroke-width="1.700"/><path d="M3 1h9" stroke="#2a7aa8" stroke-width="1.700"/></symbol>
<symbol id="b10" viewBox="0 0 27 20"><use href="#pf"/><path d="M5 3h13M5 3v14" stroke="#1d5c85" stroke-width="1.500"/><rect x="3" y="1" width="4" height="4" fill="#fff" stroke="#222"/><rect x="17" y="1" width="4" height="4" fill="#fff" stroke="#222"/><rect x="3" y="16" width="4" height="4" fill="#fff" stroke="#222"/></symbol>
<symbol id="b11" viewBox="0 0 27 20"><use href="#pf"/><path d="M2 18L20 2" stroke="#2a7aa8" stroke-width="1.600"/><rect x="8.500" y="7.500" width="4" height="4" fill="#fff" stroke="#222"/></symbol>
<symbol id="b12" viewBox="0 0 27 20"><use href="#pf"/><circle cx="13" cy="10" r="5" fill="#fff" stroke="#2a7aa8" stroke-width="1.400"/><circle cx="13" cy="10" r="2" fill="#222"/><path d="M13 1v5M13 14v6M5 10h4M17 10h5" stroke="#222"/></symbol>
<symbol id="b13" viewBox="0 0 27 20"><use href="#pf"/><path d="M4 2h6v16H4zM10 4h8v12h-8" fill="#f2f2f2" stroke="#333"/><path d="M1 10h21" stroke="#2a7aa8" stroke-dasharray="2 1.200"/></symbol>
<symbol id="b14" viewBox="0 0 27 20"><use href="#pf"/><path d="M5 9l7-7 7 6-7 7z" fill="#f2f2f2" stroke="#222" stroke-width="1.400"/><path d="M8 9l4-4 4 3" fill="none" stroke="#2a7aa8" stroke-width="1.200"/></symbol>
<symbol id="b15" viewBox="0 0 27 20"><use href="#pf"/><path d="M3 10l5 9L14 2h7" fill="none" stroke="#222" stroke-width="1.300"/><path d="M3 10h8" stroke="#222" stroke-width="1.300"/></symbol>
<symbol id="b16" viewBox="0 0 27 20"><use href="#pf"/><rect x="1" y="1" width="20" height="9" fill="#f5f5f5" stroke="#222"/><path d="M9 1v9" stroke="#222"/><rect x="3" y="3.500" width="4" height="4" rx="2" fill="none" stroke="#222" stroke-width=".7"/><text x="10" y="8.500" font-family="Liberation Sans,sans-serif" font-size="7" fill="#222">0.3</text></symbol>
<symbol id="b17" viewBox="0 0 27 20"><use href="#pf"/><circle cx="13" cy="8" r="6" fill="#f4f4f4" stroke="#222"/><path d="M9 12l-7 7" stroke="#222" stroke-width="2"/><text x="13" y="11" text-anchor="middle" font-family="Liberation Sans,sans-serif" font-size="8" fill="#222">N</text></symbol>
<symbol id="b18" viewBox="0 0 27 20"><use href="#pf"/><path d="M3 1h14v11H3z" fill="#f6f6f6" stroke="#222"/><text x="10" y="11" text-anchor="middle" font-family="Liberation Sans,sans-serif" font-size="11" fill="#222">A</text><path d="M10 12l-4 6h8z" fill="#111"/></symbol>
<symbol id="b19" viewBox="0 0 27 20"><use href="#pf"/><path d="M1 18L7 6h4l2 4 5-8 4 0-7 9-3-3-4 1-4 9" fill="#d6d6d6" stroke="#222" stroke-width="1.200"/></symbol>
<symbol id="b20" viewBox="0 0 27 20"><use href="#pf"/><path d="M4 1v11h11" fill="none" stroke="#222" stroke-width="1.200"/><path d="M5 7h4v4" fill="none" stroke="#2a7aa8"/><path d="M3 14q2 3 1 6M7 14q2 3 1 6M11 14q2 3 1 6M15 14q1 2 1 5" fill="none" stroke="#333" stroke-width=".9"/></symbol>
<symbol id="b21" viewBox="0 0 27 20"><use href="#pf"/><circle cx="13" cy="8" r="6" fill="#f4f4f4" stroke="#222"/><path d="M9 12l-7 7" stroke="#222" stroke-width="2"/><text x="13" y="11" text-anchor="middle" font-family="Liberation Sans,sans-serif" font-size="6.500" fill="#222">A&#176;</text></symbol>
<symbol id="b22" viewBox="0 0 27 20"><use href="#pf"/><path d="M5 1h10v12l-5 6-5-6z" fill="#e6e6e6" stroke="#333" stroke-dasharray="2 1"/><path d="M7 13l3 3 3-3" fill="none" stroke="#666"/></symbol>
<symbol id="b23" viewBox="0 0 27 20"><use href="#pf"/><rect x="3" y="1" width="14" height="15" fill="#f6f6f6" stroke="#222"/><text x="10" y="12" text-anchor="middle" font-family="Liberation Sans,sans-serif" font-size="10" fill="#222">A&#176;</text></symbol>
<symbol id="b24" viewBox="0 0 27 20"><use href="#pf"/><circle cx="11" cy="9" r="7.500" fill="#eee" stroke="#333"/><path d="M11 9V1.500a7.500 7.500 0 0 1 7.500 7.500zM11 9H3.500A7.500 7.500 0 0 0 11 16.500z" fill="#222"/></symbol>
<symbol id="b25" viewBox="0 0 27 20"><use href="#pf"/><path d="M1 7h12" stroke="#222" stroke-width="1.600"/><rect x="12" y="1" width="7" height="10" fill="url(#gb)" stroke="#134f78"/></symbol>
<symbol id="b26" viewBox="0 0 27 20"><use href="#pf"/><path d="M1 7h20" stroke="#222" stroke-width="1.600"/><rect x="7" y="1" width="7" height="10" fill="url(#gb)" stroke="#134f78"/></symbol>
<symbol id="cp1" viewBox="0 0 26 26"><path d="M3 10l10-7 10 5v9l-10 7-10-5z" fill="url(#gb)" stroke="#134f78" stroke-width=".8"/><path d="M3 10l10 5 10-7M13 15v9" fill="none" stroke="#e8e8e8"/><path d="M12 22l2-6 9-11 3 3-9 10z" fill="#f2c84a" stroke="#555" stroke-width=".7"/></symbol>
<symbol id="cp2" viewBox="0 0 26 26"><path d="M7 24V9M3 12l4-6 4 6" fill="none" stroke="#222" stroke-width="2"/><path d="M15 4l4-2 5 2v8l-5 2-4-2z" fill="url(#gb)" stroke="#134f78" stroke-width=".7"/><path d="M15 15h9v9h-9z" fill="none" stroke="#ccc"/></symbol>
<symbol id="cp3" viewBox="0 0 26 26"><circle cx="15" cy="10" r="7" fill="#eef4f8" stroke="#555"/><path d="M10 15l-7 8" stroke="#2a7aa8" stroke-width="2.600"/><path d="M12 9h6M12 12h6" stroke="#222" stroke-width="1.200"/></symbol>
<symbol id="cp4" viewBox="0 0 26 26"><path d="M1 19l12-5 12 5-12 6z" fill="url(#gb)" stroke="#134f78" stroke-width=".7"/><path d="M13 19V4" stroke="#222" stroke-width="2"/><path d="M9 8l4-6 4 6z" fill="#222"/></symbol>
<symbol id="cp5" viewBox="0 0 26 26"><path d="M12 12V3a10 10 0 0 1 10 9z" fill="#d8b820"/><path d="M12 12H2a10 10 0 0 1 10-9z" fill="#d83226"/><path d="M2 12a10 10 0 0 0 10 10V12z" fill="#2c62c8"/><path d="M12 22a10 10 0 0 0 10-10H12z" fill="#58b334"/><path d="M12 24l2-7 9-6 3 3-8 8z" fill="#f2c84a" stroke="#555" stroke-width=".7"/></symbol>
</defs>
</svg>

<!-- Title bar -->
<header class="titlebar d-flex position-relative">
  <div class="logo d-flex align-items-center">
    <svg width="29" height="31" viewBox="0 0 29 31"><g fill="none" stroke="#d2323a" stroke-width="1.500"><path d="M11 3L25 2C27 2 27 4 25 6C23 8 20 10 17 11"/><path d="M18 14C10 12 3 19 1 28L5 27L18 14"/><path d="M29 15C20 13 15 17 20 20C26 23 26 27 15 28"/></g></svg>
    <div class="logo-text"><b>SOLID</b><span>WORKS</span></div>
  </div>
  <div class="menuzone d-flex align-items-center">
    <span>File</span><span>Edit</span><span>View</span><span>Insert</span><span>Tools</span><span>Window</span><span>Help</span>
    <svg class="ms-auto me-2" width="14" height="14" viewBox="0 0 14 14"><path d="M8 1l5 5-2 .5-2.500 3V12L5 9 1 13l3.500-4.500L2 6h2.500L7 3z" fill="#3a8fc0" stroke="#1d5c85" stroke-width=".5"/></svg>
  </div>
  <div class="qbar d-flex align-items-center">
    <svg class="qi"><use href="#new"/></svg><span class="carcell d-flex justify-content-center"><i class="car"></i></span>
    <svg class="qi"><use href="#opn"/></svg><span class="carcell d-flex justify-content-center"><i class="car"></i></span>
    <svg class="qi"><use href="#sav"/></svg><span class="carcell d-flex justify-content-center"><i class="car"></i></span>
    <svg class="qi"><use href="#prt"/></svg><span class="carcell d-flex justify-content-center"><i class="car"></i></span>
    <svg class="qi"><use href="#und"/></svg><span class="cc16 d-flex justify-content-center"><i class="car"></i></span>
    <div class="selbox d-flex align-items-center justify-content-center"><svg width="20" height="22"><use href="#cur"/></svg></div>
    <div class="selcar d-flex align-items-center justify-content-center"><i class="car"></i></div>
    <svg class="qi ms-1"><use href="#trf"/></svg>
    <svg class="qi ms6"><use href="#pro"/></svg>
    <svg class="qi ms-1"><use href="#gea"/></svg>
    <span class="d-flex ms-1"><i class="car"></i></span>
  </div>
  <div class="doctitle">SHEETMETAL.SLDPRT</div>
  <div class="search d-flex align-items-center">
    <svg class="ms-1" width="18" height="16" viewBox="0 0 18 16"><path d="M3 2h7v6H6l-3 2z" fill="#666"/><path d="M9 6h6v5l1 2-3-2H9z" fill="#aaa"/></svg>
    <div class="search-in d-flex align-items-center">Search Community Forum</div>
    <svg class="ms-1" width="20" height="20" viewBox="0 0 20 20"><circle cx="8" cy="8" r="6" fill="none" stroke="#444" stroke-width="1.400"/><path d="M12.500 12.500L18 18" stroke="#444" stroke-width="2"/></svg>
    <i class="car ms-auto me-1"></i>
  </div>
  <div class="winbtns d-flex align-items-center">
    <span class="qm">?</span>
    <i class="car wcar"></i>
    <svg class="text-dark me-2" width="16" height="16"><use href="#wmin"/></svg>
    <svg class="text-dark me-2" width="16" height="16"><use href="#wres"/></svg>
    <svg class="text-dark" width="16" height="16"><use href="#wx"/></svg>
  </div>
</header>

<!-- Command manager -->
<section class="upper d-flex">
  <div class="ribbon d-flex">
    <div class="grp g1 d-flex">
      <div class="rb w60 va d-flex flex-column"><svg class="ric"><use href="#ext"/></svg><div class="lab">Extruded<br>Boss/Base</div></div>
      <div class="rb w58 va d-flex flex-column"><svg class="ric"><use href="#rev"/></svg><div class="lab">Revolved<br>Boss/Base</div></div>
      <div class="rl ml4">
        <div class="d-flex align-items-center"><svg width="18" height="18"><use href="#swp"/></svg>Swept Boss/Base</div>
        <div class="d-flex align-items-center"><svg width="18" height="18"><use href="#lof"/></svg>Lofted Boss/Base</div>
        <div class="d-flex align-items-center"><svg width="18" height="18"><use href="#bnd"/></svg>Boundary Boss/Base</div>
      </div>
    </div>
    <div class="grp g2 d-flex">
      <div class="rb w51 va d-flex flex-column"><svg class="ric"><use href="#xcut"/></svg><div class="lab">Extruded<br>Cut</div></div>
      <div class="rb w51 vb d-flex flex-column"><svg class="ric"><use href="#hole"/></svg><div class="lab">Hole<br>Wizard</div><i class="car"></i></div>
      <div class="rb w52 va d-flex flex-column"><svg class="ric"><use href="#rvc"/></svg><div class="lab">Revolved<br>Cut</div></div>
      <div class="rl ml5">
        <div class="d-flex align-items-center"><svg width="18" height="18"><use href="#swc"/></svg>Swept Cut</div>
        <div class="d-flex align-items-center"><svg width="18" height="18"><use href="#lfc"/></svg>Lofted Cut</div>
        <div class="d-flex align-items-center"><svg width="18" height="18"><use href="#bdc"/></svg>Boundary Cut</div>
      </div>
    </div>
    <div class="grp g3 d-flex">
      <div class="rb w35 vb d-flex flex-column"><svg class="ric"><use href="#fil"/></svg><div class="lab">Fillet</div><i class="car"></i></div>
      <div class="rb w46 vb d-flex flex-column"><svg class="ric"><use href="#lin"/></svg><div class="lab">Linear<br>Pattern</div><i class="car"></i></div>
      <div class="rl ml4 wl1">
        <div class="d-flex align-items-center"><svg width="18" height="18"><use href="#rib"/></svg>Rib</div>
        <div class="d-flex align-items-center"><svg width="18" height="18"><use href="#drf"/></svg>Draft</div>
        <div class="d-flex align-items-center"><svg width="18" height="18"><use href="#shl"/></svg>Shell</div>
      </div>
      <div class="rl">
        <div class="d-flex align-items-center"><svg width="18" height="18"><use href="#wrp"/></svg>Wrap</div>
        <div class="d-flex align-items-center"><svg width="18" height="18"><use href="#int"/></svg>Intersect</div>
        <div class="d-flex align-items-center"><svg width="18" height="18"><use href="#mir"/></svg>Mirror</div>
      </div>
    </div>
    <div class="grp g4 d-flex">
      <div class="rb w64 vb d-flex flex-column"><svg class="ric"><use href="#ref"/></svg><div class="lab">Reference<br>Geometry</div><i class="car"></i></div>
      <div class="rb w38 vb d-flex flex-column"><svg class="ric"><use href="#crv"/></svg><div class="lab">Curves</div><i class="car"></i></div>
    </div>
    <div class="grp g5 border-0 d-flex">
      <div class="rb w60 va d-flex flex-column"><svg class="ric"><use href="#i3d"/></svg><div class="lab">Instant3D</div></div>
    </div>
  </div>
  <div class="shots d-flex align-items-center">
    <div class="grip"></div>
    <svg width="20" height="20"><use href="#cam"/></svg>
    <svg width="20" height="20"><use href="#vid"/></svg>
    <svg width="20" height="20"><use href="#vid2"/></svg>
  </div>
</section>

<!-- Tabs + view toolbar -->
<nav class="tabsrow d-flex">
  <div class="cmtab t63 on">Features</div>
  <div class="cmtab t56">Sketch</div>
  <div class="cmtab t61">Evaluate</div>
  <div class="cmtab t65">DimXpert</div>
  <div class="cmtab t133">SOLIDWORKS Add-Ins</div>
  <div class="cmtab t117">SOLIDWORKS MBD</div>
  <div class="vtb d-flex align-items-start">
    <svg class="vi"><use href="#v1"/></svg><svg class="vi"><use href="#v2"/></svg><svg class="vi"><use href="#v3"/></svg><svg class="vi"><use href="#v4"/></svg><svg class="vi"><use href="#v5"/></svg><svg class="vi"><use href="#v6"/></svg>
    <span class="vc"><i class="car"></i></span>
    <svg class="vi"><use href="#v7"/></svg>
    <span class="vc"><i class="car"></i></span>
    <svg class="vi"><use href="#v8"/></svg>
    <span class="vc"><i class="car"></i></span>
    <svg class="vi"><use href="#v9"/></svg><svg class="vi"><use href="#v10"/></svg>
    <span class="vc"><i class="car"></i></span>
    <svg class="vi"><use href="#v11"/></svg>
    <span class="vc"><i class="car"></i></span>
  </div>
  <div class="dctl d-flex align-items-start">
    <svg class="vi"><use href="#tprev"/></svg><svg class="vi"><use href="#tnext"/></svg>
    <svg class="vi text-black-50 px-1"><use href="#wmin"/></svg><svg class="vi text-black-50 px-1"><use href="#wres"/></svg><svg class="vi text-black-50 px-1"><use href="#wx"/></svg>
  </div>
</nav>

<main class="main d-flex">
  <aside class="panel d-flex flex-column">
    <div class="pgrip d-flex align-items-center"><span class="dot"></span></div>
    <div class="ptabs d-flex">
      <div class="ptab on d-flex align-items-center"><svg width="20" height="20"><use href="#part"/></svg></div>
      <div class="ptab d-flex align-items-center"><svg width="20" height="20"><use href="#pro"/></svg></div>
      <div class="ptab d-flex align-items-center"><svg width="20" height="20"><use href="#ptree"/></svg></div>
      <div class="ptab d-flex align-items-center"><svg width="20" height="20"><use href="#tgt"/></svg></div>
      <div class="ptab d-flex align-items-center"><svg width="20" height="20"><use href="#ball"/></svg></div>
      <svg class="chev align-self-center" width="10" height="12" viewBox="0 0 10 12"><path d="M2 1l5 5-5 5" fill="none" stroke="#666" stroke-width="1.500"/></svg>
    </div>
    <div class="pfilter d-flex align-items-center"><svg width="18" height="20"><use href="#flt"/></svg></div>
    <ul class="tree list-group list-group-flush">
      <li class="list-group-item root"><svg class="ti"><use href="#part"/></svg>SHEETMETAL&nbsp;&nbsp;(Predeterminado&lt;&lt;Predete</li>
      <li class="list-group-item"><span class="ta"><i class="arr-r"></i></span><svg class="ti"><use href="#hist"/></svg>History</li>
      <li class="list-group-item"><span class="ta"></span><svg class="ti"><use href="#sens"/></svg>Sensors</li>
      <li class="list-group-item"><span class="ta"><i class="arr-r"></i></span><svg class="ti"><use href="#anno"/></svg>Anotaciones</li>
      <li class="list-group-item"><span class="ta"><i class="arr-r"></i></span><svg class="ti"><use href="#cutl"/></svg>Cut list(1)</li>
      <li class="list-group-item"><span class="ta"><i class="arr-r"></i></span><svg class="ti"><use href="#eqn"/></svg>Ecuaciones</li>
      <li class="list-group-item"><span class="ta"></span><svg class="ti"><use href="#mat"/></svg>Material &lt;not specified&gt;</li>
      <li class="list-group-item"><span class="ta"></span><svg class="ti"><use href="#pln"/></svg>Alzado</li>
      <li class="list-group-item"><span class="ta"></span><svg class="ti"><use href="#pln"/></svg>Planta</li>
      <li class="list-group-item"><span class="ta"></span><svg class="ti"><use href="#pln"/></svg>Vista lateral</li>
      <li class="list-group-item"><span class="ta"></span><svg class="ti"><use href="#org"/></svg>Origen</li>
      <li class="list-group-item"><span class="ta"><i class="arr-r"></i></span><svg class="ti"><use href="#smet"/></svg>Sheet-Metal1</li>
      <li class="list-group-item"><span class="ta"><i class="arr-r"></i></span><svg class="ti"><use href="#bfl"/></svg>Base-Flange1</li>
      <li class="list-group-item pm"><span class="ta"><i class="arr-d"></i></span><svg class="ti"><use href="#ffld"/></svg>Flat-Pattern</li>
      <li class="list-group-item"><span class="ta ta10"><i class="arr-r"></i></span><div class="flatsel d-flex align-items-center"><svg width="20" height="18"><use href="#fpt"/></svg>Flat-Pattern1</div></li>
    </ul>
    <div class="bluebar"></div>
    <div class="hsb d-flex align-items-center">
      <span class="sa"><svg width="7" height="10" viewBox="0 0 7 10"><path d="M5 1L1 5l4 4" fill="none" stroke="#555" stroke-width="1.300"/></svg></span>
      <div class="thumb"></div>
      <svg class="ms-auto me-1" width="7" height="10" viewBox="0 0 7 10"><path d="M2 1l4 4-4 4" fill="none" stroke="#555" stroke-width="1.300"/></svg>
    </div>
  </aside>

  <div class="viewport">
    <svg class="model" width="1674" height="873" viewBox="246 139 1674 873">
      <!-- splitter handle -->
      <path d="M246 545h7v38h-7" fill="#f7f7f7" stroke="#9a9a9a"/><circle cx="249.500" cy="564" r="2.800" fill="#c8c8c8" stroke="#a0a0a0" stroke-width=".7"/>
      <!-- part -->
      <g transform="translate(0 -1)">
      <g stroke="#222" stroke-width=".7" stroke-linejoin="round">
        <polygon points="922,407 1269,511 1023,760 1023,834 612,708" fill="#dbe3fc"/>
        <polygon points="612,708 1023,834 1025,850 615,726" fill="#666a7a"/>
        <polygon points="1347,456 1352,534 1350,541 1040,846 1033,759" fill="#9499ac"/>
        <polygon points="1330,450 1347,456 1033,759 1019,754" fill="#dce4fc"/>
        <polygon points="1019,754 1033,759 1040,834 1023,834" fill="#696c7c"/>
        <path d="M1023 834H1040L1042 840Q1036 850 1027 850L1025 850Z" fill="#7d8396"/>
        <polygon points="911,268 922,407 610,706 599,570" fill="#9499ac"/>
        <polygon points="894,263 911,268 599,570 584,566" fill="#dce4fc"/>
        <polygon points="584,566 599,570 610,706 594,702" fill="#696c7c"/>
        <path d="M594 702Q596 722 615 726L612 708Z" fill="#7d8396"/>
      </g>
      <path d="M614 707L921 410" stroke="#fff" stroke-width="2"/>
      <polygon points="1352,534 1350,541 1040,846 1037,842" fill="#5f6479"/>
      <g fill="none" stroke="#4aa8ff" stroke-width=".9">
        <path d="M594 702L908 399L922 405L612 708ZM612 726L926 422L926 413L922 405M908 399L913 415L926 422M913 415L612 708M594 702Q596 722 612 726L612 708M601 690L612 708"/>
        <path d="M1025 850Q1036 850 1042 840L1352 537M1023 834L1040 838M1025 850L1023 834M1336 530L1352 534L1350 541M1040 838L1350 534"/>
      </g>
      <path d="M1023 834L1033 812L1336 530" fill="none" stroke="#4aa8ff" stroke-width="1.400"/>
      </g>
      <!-- triad -->
      <path d="M286 952L284 938" stroke="#14631e" stroke-width="4"/>
      <path d="M284 928l5 9-3 2h-5l-3-2z" fill="#3c9a48" stroke="#14631e" stroke-width=".6"/>
      <path d="M287 953L277 962" stroke="#122a9c" stroke-width="3.500"/>
      <path d="M271 966l-1-6 6-2 4 4-4 5z" fill="#1b36c8"/>
      <path d="M288 953L300 957" stroke="#8e1a1a" stroke-width="4"/>
      <path d="M311 960l-11 3 2-9z" fill="#c22424" stroke="#8e1a1a" stroke-width=".5"/>
      <path d="M280 920l3 4 3-4M283 924v5" fill="none" stroke="#1a7a2a"/>
      <path d="M265 966h6l-6 7h6" fill="none" stroke="#1b36ff"/>
      <path d="M312 958l5 7M317 958l-5 7" fill="none" stroke="#ff2020"/>
    </svg>

    <div class="crumb cr1 position-absolute">
      <span class="blue"></span>
      <svg class="position-absolute cpart" width="22" height="22"><use href="#part"/></svg>
      <svg class="position-absolute cflat" width="22" height="22"><use href="#fpt"/></svg>
      <span class="tx">Flat-Pattern1</span>
    </div>
    <div class="cr2 d-flex align-items-center">
      <svg class="bentry" width="17" height="20"><use href="#entry"/></svg>
      <div class="cbox b1 d-flex align-items-center"><svg width="20" height="20"><use href="#bend"/></svg>Bend-Lines2</div>
      <div class="cbox b2 d-flex align-items-center"><svg width="20" height="20"><use href="#bbox"/></svg>Bounding-Box2</div>
    </div>

    <div class="task">
      <div class="on d-flex align-items-center"><svg width="20" height="20"><use href="#thome"/></svg></div>
      <div class="d-flex align-items-center"><svg width="20" height="20"><use href="#tbook"/></svg></div>
      <div class="d-flex align-items-center"><svg width="20" height="20"><use href="#tfold"/></svg></div>
      <div class="d-flex align-items-center"><svg width="20" height="20"><use href="#tdsg"/></svg></div>
      <div class="d-flex align-items-center"><svg width="20" height="20"><use href="#tball"/></svg></div>
      <div class="d-flex align-items-center"><svg width="20" height="20"><use href="#tlist"/></svg></div>
    </div>
  </div>
</main>

<!-- Rollback / connector overlay -->
<svg class="overlay" width="420" height="560" viewBox="0 0 420 560">
  <g fill="none" stroke="#1f7ab8" stroke-width="2">
    <path d="M254 225H271M347 225H380Q396 225 396 241V526"/>
    <path d="M122 467H378Q396 467 396 482"/>
    <path d="M128 489H378Q396 489 396 504"/>
  </g>
  <path d="M246 225l9-4v8z" fill="#1f7ab8"/>
  <path d="M118 467l9-4v8zM124 489l9-4v8z" fill="#1f7ab8"/>
  <path d="M145 533H389" stroke="#666" stroke-width="1.500" stroke-dasharray="4 3"/>
  <circle cx="396" cy="533" r="7" fill="#eeeeee" stroke="#555" stroke-width="1.200"/>
</svg>
<div class="smlabel">Sheet-Metal1</div>

<!-- Context toolbar -->
<div class="ctx d-flex flex-wrap align-content-start">
  <svg class="c me-1" width="26" height="26" viewBox="0 0 30 28"><use href="#cp1" width="26" height="26"/></svg>
  <svg class="c me-4" width="26" height="26" viewBox="0 0 30 28"><use href="#cp2" width="26" height="26"/></svg>
  <svg class="c" width="26" height="26" viewBox="0 0 30 28"><use href="#cp3" width="26" height="26"/></svg>
  <svg class="c" width="26" height="26" viewBox="0 0 30 28"><use href="#cp4" width="26" height="26"/></svg>
  <svg class="c" width="26" height="26" viewBox="0 0 30 28"><use href="#cp5" width="26" height="26"/></svg>
  <i class="car"></i>
</div>

<!-- Bottom tabs -->
<div class="btabs d-flex">
  <span class="bmark"></span>
  <div class="nav4 d-flex">
    <span><svg width="8" height="8" viewBox="0 0 8 8"><path d="M1 0v8M7 0L2 4l5 4z" fill="#8a8a8a" stroke="#8a8a8a"/></svg></span>
    <span><svg width="8" height="8" viewBox="0 0 8 8"><path d="M7 0L2 4l5 4z" fill="#8a8a8a"/></svg></span>
    <span><svg width="8" height="8" viewBox="0 0 8 8"><path d="M1 0l5 4-5 4z" fill="#8a8a8a"/></svg></span>
    <span><svg width="8" height="8" viewBox="0 0 8 8"><path d="M7 0v8M1 0l5 4-5 4z" fill="#8a8a8a" stroke="#8a8a8a"/></svg></span>
  </div>
  <div class="btab on t57">Model</div>
  <div class="btab t67">3D Views</div>
  <div class="btab t108">Motion Study 1</div>
</div>

<!-- Bottom toolbar -->
<div class="btools d-flex">
  <div class="bgrip"></div>
  <svg width="20" height="20"><use href="#fg1"/></svg>
  <svg width="24" height="20" class="fg2"><use href="#fg2"/></svg>
  <svg width="20" height="20" class="fg3"><use href="#fg3"/></svg>
  <div class="sel d-flex align-items-center justify-content-center"><svg width="18" height="20"><use href="#cur"/></svg></div>
  <div class="selc d-flex align-items-center justify-content-center"><i class="car"></i></div>
  <svg width="20" height="20" class="blk"><use href="#blk"/></svg>
  <span class="sep sep1"></span>
  <svg class="bf"><use href="#b1"/></svg><svg class="bf"><use href="#b2"/></svg><svg class="bf"><use href="#b3"/></svg><svg class="bf"><use href="#b4"/></svg><svg class="bf"><use href="#b5"/></svg><svg class="bf"><use href="#b6"/></svg><svg class="bf"><use href="#b7"/></svg><svg class="bf"><use href="#b8"/></svg><svg class="bf"><use href="#b9"/></svg><svg class="bf"><use href="#b10"/></svg><svg class="bf"><use href="#b11"/></svg><svg class="bf"><use href="#b12"/></svg><svg class="bf"><use href="#b13"/></svg><svg class="bf"><use href="#b14"/></svg><svg class="bf"><use href="#b15"/></svg><svg class="bf"><use href="#b16"/></svg><svg class="bf"><use href="#b17"/></svg><svg class="bf"><use href="#b18"/></svg><svg class="bf"><use href="#b19"/></svg><svg class="bf"><use href="#b20"/></svg><svg class="bf"><use href="#b21"/></svg><svg class="bf"><use href="#b22"/></svg><svg class="bf"><use href="#b23"/></svg><svg class="bf"><use href="#b24"/></svg><svg class="bf"><use href="#b25"/></svg><svg class="bf"><use href="#b26"/></svg>
  <span class="sep sep2"></span>
</div>

<!-- Status bar -->
<footer class="status d-flex align-items-center">
  <span>SHEETMETAL</span>
  <span class="ms-auto vdiv"></span><span class="vdiv ms-2"></span><span class="vdiv ms-2"></span><span class="vdiv ms-3"></span>
  <span class="mmgs">MMGS</span>
  <i class="caru"></i>
  <svg class="me-1" width="20" height="18" viewBox="0 0 20 18"><path d="M2 8l6-5 10 6-1 5-6 3-9-5z" fill="#eee" stroke="#444"/><path d="M7 5l9 5M5 7l9 5" stroke="#444" stroke-width=".8"/></svg>
</footer>

<script src="https://cdn.jsdelivr.net/npm/bootstrap@5.3.0/dist/js/bootstrap.bundle.min.js"></script>
</body>
</html>
